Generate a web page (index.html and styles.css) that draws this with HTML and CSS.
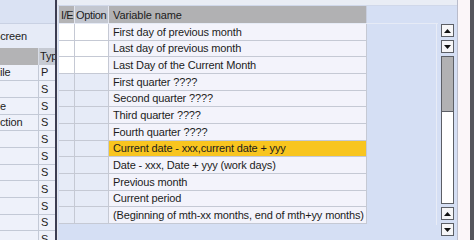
FILE: index.html
```html
<!DOCTYPE html>
<html>
<head>
<meta charset="utf-8">
<link rel="stylesheet" href="styles.css">
</head>
<body>
<div class="screen">
  <div class="left">
    <div class="l-top"></div>
    <div class="l-title"><span class="cut">Screen</span></div>
    <div class="l-grid">
      <div class="lh"></div><div class="lh typ">Typ</div>
      <div class="lc"><span>ile</span></div><div class="lc t">P</div>
      <div class="lc"></div><div class="lc t">S</div>
      <div class="lc"><span>e</span></div><div class="lc t">S</div>
      <div class="lc"><span>ction</span></div><div class="lc t">S</div>
      <div class="lc"></div><div class="lc t">S</div>
      <div class="lc"></div><div class="lc t">S</div>
      <div class="lc"></div><div class="lc t">S</div>
      <div class="lc"></div><div class="lc t">S</div>
      <div class="lc"></div><div class="lc t">S</div>
      <div class="lc"></div><div class="lc t">S</div>
      <div class="lc"></div><div class="lc t">S</div>
    </div>
  </div>
  <div class="divider"></div>
  <div class="right">
    <div class="r-top"></div>
    <div class="r-main">
      <div class="tbl-wrap">
        <div class="tbl-head">
          <div class="th">I/E</div>
          <div class="th opt">Option</div>
          <div class="th var">Variable name</div>
        </div>
        <div class="tbl-body">
          <div class="rows">
            <div class="cell w"></div><div class="cell w"></div><div class="cell v">First day of previous month</div>
            <div class="cell w"></div><div class="cell w"></div><div class="cell v">Last day of previous month</div>
            <div class="cell w"></div><div class="cell w"></div><div class="cell v">Last Day of the Current Month</div>
            <div class="cell"></div><div class="cell"></div><div class="cell v">First quarter ????</div>
            <div class="cell"></div><div class="cell"></div><div class="cell v">Second quarter ????</div>
            <div class="cell"></div><div class="cell"></div><div class="cell v">Third quarter ????</div>
            <div class="cell"></div><div class="cell"></div><div class="cell v">Fourth quarter ????</div>
            <div class="cell"></div><div class="cell"></div><div class="cell v sel">Current date - xxx,current date + yyy</div>
            <div class="cell"></div><div class="cell"></div><div class="cell v">Date - xxx, Date + yyy (work days)</div>
            <div class="cell"></div><div class="cell"></div><div class="cell v">Previous month</div>
            <div class="cell"></div><div class="cell"></div><div class="cell v">Current period</div>
            <div class="cell"></div><div class="cell"></div><div class="cell v">(Beginning of mth-xx months, end of mth+yy months)</div>
          </div>
          <div class="body-fill"></div>
        </div>
      </div>
      <div class="scroll">
        <div class="sbtn"><svg width="7" height="4" viewBox="0 0 7 4"><path d="M0 4 L3.5 0 L7 4 Z" fill="#111"/></svg></div>
        <div class="sbtn"><svg width="7" height="4" viewBox="0 0 7 4"><path d="M0 0 L3.5 4 L7 0 Z" fill="#111"/></svg></div>
        <div class="track">
          <div class="thumb"></div>
        </div>
        <div class="sbtn"><svg width="7" height="4" viewBox="0 0 7 4"><path d="M0 4 L3.5 0 L7 4 Z" fill="#111"/></svg></div>
        <div class="sbtn"><svg width="7" height="4" viewBox="0 0 7 4"><path d="M0 0 L3.5 4 L7 0 Z" fill="#111"/></svg></div>
      </div>
    </div>
  </div>
  <div class="edge-line"></div>
  <div class="edge"></div>
  <div class="edge-dark"></div>
</div>
</body>
</html>
```

FILE: styles.css
```css
* { box-sizing: border-box; }
html, body { margin: 0; padding: 0; }
body {
  width: 474px;
  height: 240px;
  overflow: hidden;
  font-family: "Liberation Sans", Arial, sans-serif;
  font-size: 11px;
  letter-spacing: -0.15px;
  color: #1c1c1c;
  background: #d6dff4;
}
.screen {
  display: grid;
  grid-template-columns: 55px 3px 399px 1px 12px 4px;
  width: 474px;
  height: 240px;
  overflow: hidden;
}
.screen > div { min-width: 0; overflow: hidden; }

/* left panel */
.left {
  background: #e3e9f6;
}
.l-top {
  height: 24px;
  background: #dae2f3;
  border-bottom: 1px solid #c9d1e3;
}
.l-title {
  height: 24px;
  display: flex;
  align-items: center;
  background: #e6ebf7;
  white-space: nowrap;
  overflow: hidden;
}
.cut { margin-left: -7px; color: #222; }
.l-grid {
  display: grid;
  grid-template-columns: 39px 16px;
  grid-auto-rows: 16.667px;
}
.lh {
  background: #b3b3b5;
  border-right: 1px solid #d8dce6;
  display: flex;
  align-items: center;
  white-space: nowrap;
  overflow: hidden;
}
.lh.typ {
  background: #c6cad3;
  border-right: none;
  padding-left: 1px;
}
.lc {
  background: #eef1fa;
  border-bottom: 1px solid #c3c9d6;
  border-right: 1px solid #c3c9d6;
  display: flex;
  align-items: center;
  white-space: nowrap;
  overflow: hidden;
}
.lc.t { border-right: none; padding-left: 2px; }

.divider {
  border-left: 2px solid #3c3d52;
  background: #e4e7ee;
}

/* right pane */
.right {
  display: flex;
  flex-direction: column;
  background: #d5dff4;
}
.r-top {
  height: 6px;
  background: #e9edf5;
  border-bottom: 1px solid #d0d8ea;
}
.r-main {
  display: flex;
  padding-left: 1px;
}
.tbl-wrap {
  width: 379px;
  flex: none;
}
.tbl-head {
  display: grid;
  grid-template-columns: 16px 34px 258px;
  height: 17px;
}
.th {
  background: #b4b4b6;
  border-right: 1px solid #e2e5ee;
  display: flex;
  align-items: center;
  padding-left: 2px;
  white-space: nowrap;
  letter-spacing: -0.4px;
  overflow: hidden;
}
.th.opt { background: #c3c7d0; padding-left: 1px; letter-spacing: -0.35px; }
.th.var { background: #b1b1b3; padding-left: 4px; letter-spacing: -0.1px; border-right: 1px solid #c8cede; }
.tbl-body {
  display: flex;
  border-top: 1px solid #e6ebf6;
}
.rows {
  display: grid;
  grid-template-columns: 16px 34px 258px;
  grid-auto-rows: 16.667px;
  width: 308px;
  flex: none;
}
.cell {
  background: #e6ebf7;
  border-bottom: 1px solid #c5c9d4;
  border-right: 1px solid #c5c9d4;
  display: flex;
  align-items: center;
  white-space: nowrap;
  overflow: hidden;
}
.cell.w { background: #ffffff; }
.cell.v {
  background: #f3f3fb;
  padding-left: 4px;
}
.cell.v.sel { background: #f8c51f; }
.body-fill {
  width: 70px;
  height: 201px;
  border-right: 1px solid #e8ecf6;
  background: #d5dff4;
}

.scroll {
  width: 13px;
  flex: none;
  margin-left: 3px;
  margin-top: 18px;
  display: flex;
  flex-direction: column;
  gap: 3px;
}
.sbtn {
  width: 13px;
  height: 13px;
  flex: none;
  border: 1px solid #5c5f66;
  background: #f6f6f8;
  display: flex;
  align-items: center;
  justify-content: center;
}
.track {
  height: 148px;
  flex: none;
  border: 1px solid #5c5f66;
  background: #ffffff;
}
.thumb {
  height: 55px;
  background: #b1b1b3;
  border-bottom: 1px solid #5c5f66;
}

.edge-line {
  background: #b9bccb;
}
.edge {
  background: #fbf6f9;
}
.edge-dark {
  background: #55565c;
}
```
